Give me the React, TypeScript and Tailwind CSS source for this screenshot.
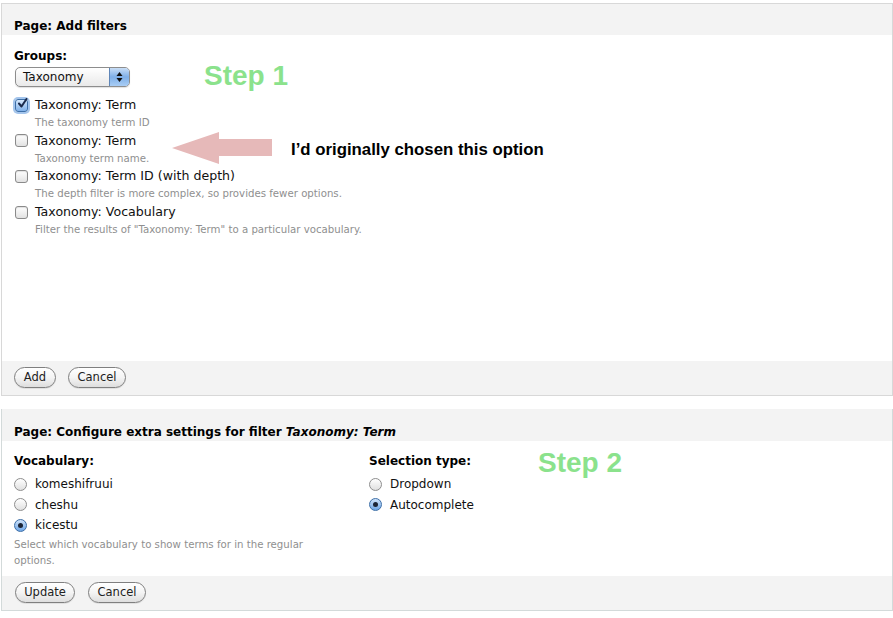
import React from "react";

const FONT = { fontFamily: '"DejaVu Sans", Verdana, sans-serif' };
const HEL = { fontFamily: '"Liberation Sans", Arial, sans-serif' };

function Checkbox({ checked }: { checked?: boolean }) {
  if (checked) {
    return (
      <span className="relative flex h-[13px] w-[13px] shrink-0 items-center justify-center rounded-[3px] border border-[#3d6fa8] bg-gradient-to-b from-[#d6e8fb] to-[#7fb0e8] shadow-[0_0_0_2px_rgba(90,150,220,0.55)]">
        <svg width="11" height="11" viewBox="0 0 11 11" className="absolute -top-[2px] left-[1px]">
          <path d="M2 5.5 L4.5 8.5 L9.5 1" fill="none" stroke="#1b2a4a" strokeWidth="2" strokeLinecap="round" strokeLinejoin="round" />
        </svg>
      </span>
    );
  }
  return (
    <span className="h-[13px] w-[13px] shrink-0 rounded-[3px] border border-[#8a8a8a] bg-gradient-to-b from-[#ffffff] to-[#e2e2e2] shadow-[inset_0_1px_1px_rgba(0,0,0,0.12)]" />
  );
}

function Radio({ checked }: { checked?: boolean }) {
  if (checked) {
    return (
      <span className="flex h-[13px] w-[13px] shrink-0 items-center justify-center rounded-full border border-[#3d6fa8] bg-gradient-to-b from-[#cfe3fa] to-[#6ea6e6]">
        <span className="h-[5px] w-[5px] rounded-full bg-[#1c2536]" />
      </span>
    );
  }
  return (
    <span className="h-[13px] w-[13px] shrink-0 rounded-full border border-[#8e8e8e] bg-gradient-to-b from-[#ffffff] to-[#e0e0e0]" />
  );
}

function Button({ children, w }: { children: React.ReactNode; w: string }) {
  return (
    <span
      className={`flex h-[21px] ${w} items-center justify-center rounded-full border border-[#7f7f7f] bg-gradient-to-b from-[#ffffff] via-[#f4f4f4] to-[#dedede] text-[11.5px] text-[#222] shadow-[0_1px_0_rgba(0,0,0,0.08)]`}
    >
      {children}
    </span>
  );
}

const filters = [
  { label: "Taxonomy: Term", desc: "The taxonomy term ID", checked: true },
  { label: "Taxonomy: Term", desc: "Taxonomy term name." },
  { label: "Taxonomy: Term ID (with depth)", desc: "The depth filter is more complex, so provides fewer options." },
  { label: "Taxonomy: Vocabulary", desc: 'Filter the results of "Taxonomy: Term" to a particular vocabulary.' },
];

export default function App() {
  return (
    <div className="h-[618px] w-[893px] overflow-hidden bg-white pl-[1px] pt-[3px] text-[#1a1a1a]" style={FONT}>
      {/* Panel 1 */}
      <div className="w-[892px] border border-[#d8d8d8]">
        <div className="h-[31px] bg-[#f3f3f3] pl-[12px] pt-[14px] text-[12px] font-bold leading-[16px] text-black">
          Page: Add filters
        </div>
        <div className="relative h-[326px] pl-[12px] pt-[13px]">
          <div className="text-[12px] font-bold leading-[16px] text-black">Groups:</div>
          <div className="relative ml-[1px] mt-[3px] flex h-[20px] w-[115px] overflow-hidden rounded-[5px] border border-[#8d8d8d] bg-gradient-to-b from-[#ffffff] to-[#e9e9e9] shadow-[0_1px_1px_rgba(0,0,0,0.12)]">
            <span className="flex-1 pl-[7px] text-[12px] leading-[18px] text-[#111]">Taxonomy</span>
            <span className="flex w-[20px] flex-col items-center justify-center border-l border-[#5f86b8] bg-gradient-to-b from-[#c9def6] via-[#7eafe8] to-[#a9cdf4]">
              <svg width="7" height="12" viewBox="0 0 7 12">
                <path d="M3.5 1 L6.5 5 L0.5 5 Z" fill="#111" />
                <path d="M3.5 11 L6.5 7 L0.5 7 Z" fill="#111" />
              </svg>
            </span>
          </div>
          <div className="mt-[9px] flex flex-col">
            {filters.map((f, i) => (
              <div key={i} className="flex flex-col">
                <div className="flex h-[18px] items-center gap-[7px] pl-[1px]">
                  <Checkbox checked={f.checked} />
                  <span className="text-[12.6px] leading-[18px] text-[#111]">{f.label}</span>
                </div>
                <div className="h-[17.7px] pl-[21px] text-[10.2px] leading-[17px] text-[#8f8f8f]">{f.desc}</div>
              </div>
            ))}
          </div>

          {/* annotations */}
          <div className="absolute left-[202px] top-[25px] text-[28px] font-bold leading-[32px] text-[#8be28c]" style={HEL}>
            Step 1
          </div>
          <svg className="absolute left-[170px] top-[97px]" width="100" height="32" viewBox="0 0 100 32">
            <path d="M0 16 L47 0 L47 7 L100 7 L100 24 L47 24 L47 32 Z" fill="#e6b9b9" />
          </svg>
          <div className="absolute left-[289px] top-[105px] text-[16.8px] font-bold leading-[20px] text-black" style={HEL}>
            I’d originally chosen this option
          </div>
        </div>
        <div className="flex h-[34px] gap-[12px] bg-[#f3f3f3] pl-[12px] pt-[6px]">
          <Button w="w-[42px]">Add</Button>
          <Button w="w-[58px]">Cancel</Button>
        </div>
      </div>

      {/* Panel 2 */}
      <div className="mt-[13px] w-[892px] border-x border-b border-[#d3dada]">
        <div className="h-[32px] bg-[#f3f3f3] pl-[12px] pt-[15px] text-[12px] font-bold leading-[16px] text-black">
          Page: Configure extra settings for filter <em>Taxonomy: Term</em>
        </div>
        <div className="relative flex h-[135px] pl-[12px] pt-[12px]">
          <div className="w-[355px]">
            <div className="text-[12px] font-bold leading-[16px] text-black">Vocabulary:</div>
            <div className="mt-[5px] flex flex-col">
              {[
                { l: "komeshifruui" },
                { l: "cheshu" },
                { l: "kicestu", c: true },
              ].map((r) => (
                <div key={r.l} className="flex h-[20.5px] items-center gap-[8px]">
                  <Radio checked={r.c} />
                  <span className="text-[12px] text-[#111]">{r.l}</span>
                </div>
              ))}
            </div>
            <div className="mt-[1.5px] w-[310px] text-[10.2px] leading-[16px] text-[#8f8f8f]">
              Select which vocabulary to show terms for in the regular options.
            </div>
          </div>
          <div>
            <div className="text-[12px] font-bold leading-[16px] text-black">Selection type:</div>
            <div className="mt-[5px] flex flex-col">
              {[
                { l: "Dropdown" },
                { l: "Autocomplete", c: true },
              ].map((r) => (
                <div key={r.l} className="flex h-[20.5px] items-center gap-[8px]">
                  <Radio checked={r.c} />
                  <span className="text-[12px] text-[#111]">{r.l}</span>
                </div>
              ))}
            </div>
          </div>
          <div className="absolute left-[536px] top-[6px] text-[28px] font-bold leading-[32px] text-[#8be28c]" style={HEL}>
            Step 2
          </div>
        </div>
        <div className="flex h-[34px] gap-[13px] bg-[#f3f3f3] pl-[13px] pt-[6px]">
          <Button w="w-[60px]">Update</Button>
          <Button w="w-[58px]">Cancel</Button>
        </div>
      </div>
    </div>
  );
}
